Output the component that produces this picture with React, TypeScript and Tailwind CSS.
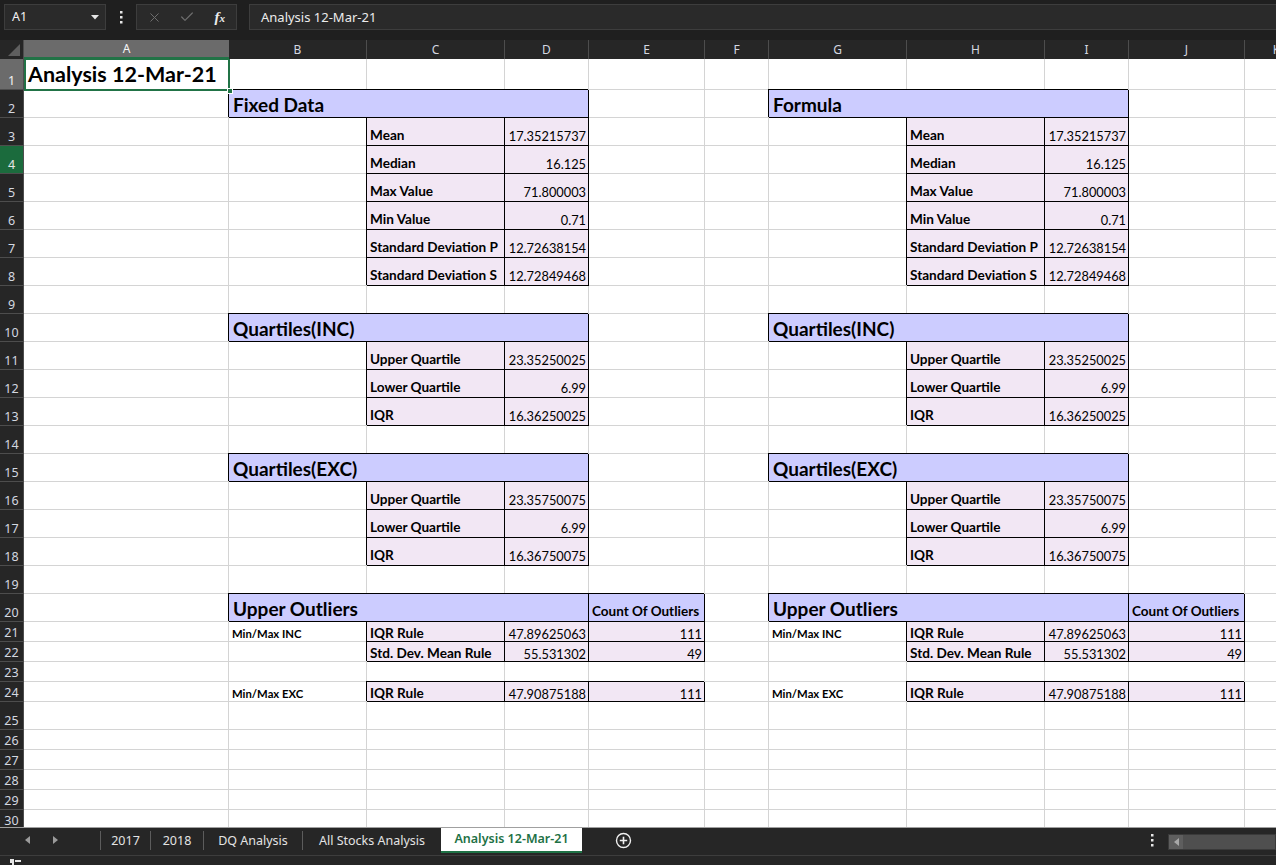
import React from "react";
import { X, Check } from "lucide-react";

type Kind = "title" | "head" | "count" | "label" | "val" | "small";
type Spec = { kind: Kind; text: string; span?: number };

const ROWH: number[] = [31, ...Array(19).fill(28), 20, 20, 20, 20, 28, 20, 20, 20, 20, 20];

const statRows: Record<number, [string, string]> = {
  3: ["Mean", "17.35215737"],
  4: ["Median", "16.125"],
  5: ["Max Value", "71.800003"],
  6: ["Min Value", "0.71"],
  7: ["Standard Deviation P", "12.72638154"],
  8: ["Standard Deviation S", "12.72849468"],
  11: ["Upper Quartile", "23.35250025"],
  12: ["Lower Quartile", "6.99"],
  13: ["IQR", "16.36250025"],
  16: ["Upper Quartile", "23.35750075"],
  17: ["Lower Quartile", "6.99"],
  18: ["IQR", "16.36750075"],
};

const heads: Record<number, [string, string]> = {
  2: ["Fixed Data", "Formula"],
  10: ["Quartiles(INC)", "Quartiles(INC)"],
  15: ["Quartiles(EXC)", "Quartiles(EXC)"],
  20: ["Upper Outliers", "Upper Outliers"],
};

function specsFor(r: number): Record<number, Spec> {
  const s: Record<number, Spec> = {};
  if (r === 1) s[1] = { kind: "title", text: "Analysis 12-Mar-21" };
  if (heads[r]) {
    s[2] = { kind: "head", text: heads[r][0], span: 3 };
    s[7] = { kind: "head", text: heads[r][1], span: 3 };
  }
  if (r === 20) {
    s[5] = { kind: "count", text: "Count Of Outliers" };
    s[10] = { kind: "count", text: "Count Of Outliers" };
  }
  if (statRows[r]) {
    const [l, v] = statRows[r];
    s[3] = { kind: "label", text: l };
    s[4] = { kind: "val", text: v };
    s[8] = { kind: "label", text: l };
    s[9] = { kind: "val", text: v };
  }
  const out: Record<number, [string, string, string, string]> = {
    21: ["Min/Max INC", "IQR Rule", "47.89625063", "111"],
    22: ["", "Std. Dev. Mean Rule", "55.531302", "49"],
    24: ["Min/Max EXC", "IQR Rule", "47.90875188", "111"],
  };
  if (out[r]) {
    const [a, b, c, d] = out[r];
    for (const base of [2, 7]) {
      if (a) s[base] = { kind: "small", text: a };
      s[base + 1] = { kind: "label", text: b };
      s[base + 2] = { kind: "val", text: c };
      s[base + 3] = { kind: "val", text: d };
    }
  }
  return s;
}

const BLANK = "bg-white border-r border-b border-[#d4d4d4]";
const BOX = "border-r border-b border-black shadow-[-1px_-1px_0_0_#000] flex items-end leading-none text-black whitespace-nowrap overflow-hidden";

function CellView({ spec, tall }: { spec: Spec; tall: boolean }) {
  const pb = tall ? "pb-[2.5px]" : "pb-[0.5px]";
  switch (spec.kind) {
    case "title":
      return (
        <div className={`${BLANK} relative flex items-end pl-[4px] pb-[4px] leading-none text-[21.5px] font-bold text-black whitespace-nowrap`}>
          {spec.text}
          <div className="absolute left-0 top-[-1px] right-[-2px] bottom-[-2px] border-2 border-[#217346]" />
          <div className="absolute right-[-5px] bottom-[-5px] w-[6px] h-[6px] bg-[#217346] border border-white" />
        </div>
      );
    case "head":
      return (
        <div className={`col-span-3 bg-[#ccccff] ${BOX} pl-[4px] pb-[3px] text-[19px] font-bold`}>{spec.text}</div>
      );
    case "count":
      return <div className={`bg-[#ccccff] ${BOX} pl-[3px] pb-[2.5px] text-[13.5px] font-bold`}>{spec.text}</div>;
    case "label":
      return <div className={`bg-[#f2e7f4] ${BOX} pl-[3px] ${pb} text-[13.6px] font-bold`}>{spec.text}</div>;
    case "val":
      return <div className={`bg-[#f2e7f4] ${BOX} justify-end pr-[2px] ${pb} text-[12.8px]`}>{spec.text}</div>;
    case "small":
      return (
        <div className={`${BLANK} flex items-end leading-none pl-[3px] pb-[2px] text-[11.3px] font-bold text-black whitespace-nowrap`}>{spec.text}</div>
      );
  }
}

function RowHeader({ n }: { n: number }) {
  const cls =
    n === 1
      ? "bg-[#6b6b6b] text-[#f2f2f2]"
      : n === 4
      ? "bg-[#1b6b3d] text-[#e6e6e6]"
      : "bg-[#262626] text-[#d4d8e0]";
  return (
    <div className={`${cls} border-b border-r border-[#4d4d4d] flex items-end justify-center pb-[2px] leading-none text-[12.5px] font-['Noto_Sans',sans-serif]`}>
      {n}
    </div>
  );
}

function Grid() {
  const cells: React.ReactNode[] = [];
  for (let r = 1; r <= 30; r++) {
    cells.push(<RowHeader key={`h${r}`} n={r} />);
    const specs = specsFor(r);
    const tall = ROWH[r - 1] >= 28;
    let c = 1;
    while (c <= 11) {
      const sp = specs[c];
      if (sp) {
        cells.push(<CellView key={`${r}-${c}`} spec={sp} tall={tall} />);
        c += sp.span ?? 1;
      } else {
        cells.push(<div key={`${r}-${c}`} className={BLANK} />);
        c += 1;
      }
    }
  }
  return (
    <div className="h-[768px] w-[1276px] overflow-hidden shrink-0">
      <div className="w-[1309px] grid grid-cols-[24px_205px_138px_138px_84px_116px_64px_138px_138px_84px_116px_64px] grid-rows-[31px_repeat(19,28px)_repeat(4,20px)_28px_repeat(5,20px)] font-['Lato',sans-serif]">
        {cells}
      </div>
    </div>
  );
}

function ColHeaders() {
  const letters = ["A", "B", "C", "D", "E", "F", "G", "H", "I", "J", "K"];
  return (
    <div className="h-[19px] w-[1276px] overflow-hidden shrink-0 bg-[#262626]">
      <div className="w-[1309px] h-full grid grid-cols-[24px_205px_138px_138px_84px_116px_64px_138px_138px_84px_116px_64px] font-['Noto_Sans',sans-serif] text-[12px]">
        <div className="relative border-r border-[#4d4d4d]">
          <svg className="absolute right-[3px] bottom-[3px]" width="12" height="12" viewBox="0 0 12 12">
            <polygon points="12,0 12,12 0,12" fill="#5f5f5f" />
          </svg>
        </div>
        {letters.map((l) =>
          l === "A" ? (
            <div key={l} className="bg-[#6b6b6b] text-[#f5f5f5] border-b-2 border-[#217346] flex items-center justify-center leading-none">
              {l}
            </div>
          ) : (
            <div key={l} className="text-[#d4d8e0] border-r border-[#4d4d4d] flex items-center justify-center leading-none">
              {l}
            </div>
          )
        )}
      </div>
    </div>
  );
}

function TopBar() {
  return (
    <div className="h-[40px] shrink-0 flex items-start pt-[4px] pl-[4px] font-['Noto_Sans',sans-serif]">
      <div className="w-[102px] h-[26px] bg-[#2a2a2a] border border-[#3d3d3d] flex items-center justify-between pl-[7px] pr-[6px]">
        <span className="text-[#f2f2f2] text-[12.5px] leading-none">A1</span>
        <svg width="8" height="5" viewBox="0 0 8 5">
          <polygon points="0,0 8,0 4,4.5" fill="#e6e6e6" />
        </svg>
      </div>
      <div className="w-[30px] h-[26px] flex items-center justify-center">
        <svg width="3" height="13" viewBox="0 0 3 13">
          <rect x="0" y="0" width="2.5" height="2.5" fill="#e6e6e6" />
          <rect x="0" y="5" width="2.5" height="2.5" fill="#e6e6e6" />
          <rect x="0" y="10" width="2.5" height="2.5" fill="#e6e6e6" />
        </svg>
      </div>
      <div className="w-[101px] h-[26px] bg-[#2a2a2a] border border-[#3d3d3d] flex items-center pl-[1px]">
        <div className="w-[36px] flex justify-center text-[#6e6e6e]">
          <X size={15} strokeWidth={1.6} />
        </div>
        <div className="w-[36px] flex justify-center text-[#6e6e6e]">
          <Check size={16} strokeWidth={1.8} />
        </div>
        <div className="w-[36px] flex justify-center text-[#ececec] font-['Liberation_Serif',serif] italic font-bold text-[15px] leading-none">
          <span>
            f<span className="text-[11px]">x</span>
          </span>
        </div>
      </div>
      <div className="ml-[12px] flex-1 h-[26px] bg-[#2a2a2a] border border-[#3d3d3d] border-r-0 flex items-center pl-[11px] text-[13px] text-[#ececec] leading-none">
        Analysis 12-Mar-21
      </div>
    </div>
  );
}

function Sep() {
  return <div className="w-px h-[19px] bg-[#5c5c5c]" />;
}

function TabBar() {
  const tab = "h-full flex items-center justify-center text-[12.5px] text-[#e3e3e3] leading-none";
  return (
    <div className="h-[28px] shrink-0 bg-[#262626] border-t border-[#a0a0a0] flex items-start font-['Noto_Sans',sans-serif]">
      <div className="w-[100px] h-[24px] flex items-center">
        <svg className="ml-[25px]" width="5" height="8" viewBox="0 0 5 8">
          <polygon points="5,0 5,8 0,4" fill="#9a9a9a" />
        </svg>
        <svg className="ml-[23px]" width="5" height="8" viewBox="0 0 5 8">
          <polygon points="0,0 0,8 5,4" fill="#9a9a9a" />
        </svg>
      </div>
      <div className="h-[24px] flex items-center">
        <Sep />
      </div>
      <div className={`${tab} w-[49px] h-[24px]`}>2017</div>
      <div className="h-[24px] flex items-center">
        <Sep />
      </div>
      <div className={`${tab} w-[52px] h-[24px]`}>2018</div>
      <div className="h-[24px] flex items-center">
        <Sep />
      </div>
      <div className={`${tab} w-[98px] h-[24px]`}>DQ Analysis</div>
      <div className="h-[24px] flex items-center">
        <Sep />
      </div>
      <div className={`${tab} w-[138px] h-[24px]`}>All Stocks Analysis</div>
      <div className="w-[141px] h-[25px] bg-white border-b-2 border-[#1e7145] flex items-center justify-center text-[12.5px] font-semibold text-[#1e7145] leading-none">
        Analysis 12-Mar-21
      </div>
      <div className="w-[82px] h-[24px] flex items-center justify-center">
        <svg width="17" height="17" viewBox="0 0 17 17">
          <circle cx="8.5" cy="8.5" r="7" fill="none" stroke="#f0f0f0" strokeWidth="1.4" />
          <path d="M8.5 4.8v7.4M4.8 8.5h7.4" stroke="#f0f0f0" strokeWidth="1.6" />
        </svg>
      </div>
      <div className="flex-1" />
      <div className="w-[20px] h-[24px] flex items-center justify-center">
        <svg width="3" height="13" viewBox="0 0 3 13">
          <rect x="0" y="0" width="2.5" height="2.5" fill="#e6e6e6" />
          <rect x="0" y="5" width="2.5" height="2.5" fill="#e6e6e6" />
          <rect x="0" y="10" width="2.5" height="2.5" fill="#e6e6e6" />
        </svg>
      </div>
      <div className="w-[108px] h-[16px] mt-[6px] ml-[6px] bg-[#4f4f4f] border border-[#3a3a3a] flex">
        <div className="w-[14px] h-full bg-[#5e5e5e] flex items-center justify-center">
          <svg width="5" height="8" viewBox="0 0 5 8">
            <polygon points="5,0 5,8 0,4" fill="#a8a8a8" />
          </svg>
        </div>
      </div>
    </div>
  );
}

function StatusBar() {
  return (
    <div className="h-[10px] shrink-0 bg-[#262626] border-t border-[#3d3d3d] flex items-start pl-[10px] pt-[2px]">
      <svg width="12" height="8" viewBox="0 0 12 8">
        <rect x="0" y="1" width="4" height="4" fill="#e6e6e6" />
        <rect x="5" y="2" width="6" height="2" fill="#e6e6e6" />
        <rect x="2" y="5" width="2" height="3" fill="#e6e6e6" />
      </svg>
    </div>
  );
}

export default function App() {
  return (
    <div className="w-[1276px] h-[865px] overflow-hidden bg-[#1f1f1f] flex flex-col">
      <TopBar />
      <ColHeaders />
      <Grid />
      <TabBar />
      <StatusBar />
    </div>
  );
}
